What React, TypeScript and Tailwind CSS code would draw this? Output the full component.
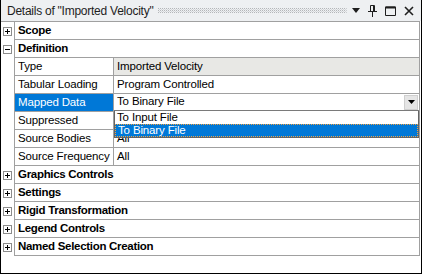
import React from "react";

const LINE = "border-[#a0a0a0]";

function Box({ open }: { open?: boolean }) {
  return (
    <svg width="9" height="9" viewBox="0 0 9 9" className="block">
      <rect x="0.5" y="0.5" width="8" height="8" fill="#fff" stroke="#8c8c8c" />
      <path d="M2 4.5h5" stroke="#000" strokeWidth="1" />
      {!open && <path d="M4.5 2v5" stroke="#000" strokeWidth="1" />}
    </svg>
  );
}

function Category({ title, open }: { title: string; open?: boolean }) {
  return (
    <div className="flex h-[18px]">
      <div className="w-[13px] flex items-center pl-[2px]">
        <Box open={open} />
      </div>
      <div className={`flex-1 border-l border-b ${LINE} flex items-center pl-[3px] font-bold tracking-[-0.3px] text-black`}>
        {title}
      </div>
    </div>
  );
}

function Prop({
  label,
  value,
  readOnly,
  selected,
  children,
}: {
  label: string;
  value?: string;
  readOnly?: boolean;
  selected?: boolean;
  children?: React.ReactNode;
}) {
  return (
    <div className="flex h-[18px]">
      <div className="w-[13px]" />
      <div className={`flex-1 flex border-l border-b ${LINE}`}>
        <div
          className={`w-[98px] flex items-center pl-[3px] whitespace-nowrap overflow-hidden ${
            selected ? "bg-[#0078d7] text-white" : "text-black"
          }`}
        >
          {label}
        </div>
        <div
          className={`relative flex-1 flex items-center border-l ${LINE} ${
            readOnly ? "bg-[#e8e8e5]" : "bg-white"
          }`}
        >
          {children ?? <span className="pl-[3px] whitespace-nowrap">{value}</span>}
        </div>
      </div>
    </div>
  );
}

function Combo() {
  return (
    <>
      <div className="absolute inset-0 flex items-center border-b border-[#7a7a7a] bg-white">
        <span className="pl-[3px] whitespace-nowrap">To Binary File</span>
        <div className="ml-auto mr-[1px] w-[14px] h-[15px] bg-[#e5e5e5] border border-[#cfcfcf] flex items-center justify-center">
          <svg width="7" height="4" viewBox="0 0 7 4">
            <path d="M0 0h7L3.5 4z" fill="#000" />
          </svg>
        </div>
      </div>
      <div className="absolute left-0 right-0 top-[17px] z-10 bg-white border-l border-r border-b border-[#646464]">
        <div className="h-[13px] flex items-center pl-[2px] leading-none whitespace-nowrap">To Input File</div>
        <div className="h-[13px] flex items-center pl-[2px] leading-none whitespace-nowrap bg-[#0078d7] text-white border border-dotted border-[#f0a040]">
          To Binary File
        </div>
      </div>
    </>
  );
}

export default function App() {
  return (
    <div className="w-[422px] h-[274px] bg-white border-l border-r border-b border-black font-['Liberation_Sans',Arial,sans-serif] text-[11.5px] tracking-[-0.15px] text-black overflow-hidden">
      <div className="h-[21px] bg-[#eef0f2] flex items-center pl-[6px] pr-[7px]">
        <span className="text-[12px] tracking-[-0.25px] text-[#1e1e1e] whitespace-nowrap">Details of "Imported Velocity"</span>
        <div className="flex-1 mx-[5px] h-[5px]">
          <svg width="100%" height="5" className="block">
            <defs>
              <pattern id="grip" width="2" height="2" patternUnits="userSpaceOnUse">
                <rect x="0" y="0" width="1" height="1" fill="#b4b6b9" />
                <rect x="1" y="1" width="1" height="1" fill="#d4d6d9" />
              </pattern>
            </defs>
            <rect width="100%" height="5" fill="url(#grip)" />
          </svg>
        </div>
        <div className="flex items-center gap-[8px]">
          <svg width="8" height="5" viewBox="0 0 8 5" className="block">
            <path d="M0 0h8L4 5z" fill="#1e1e1e" />
          </svg>
          <svg width="9" height="12" viewBox="0 0 9 12" className="block">
            <path d="M2.5 0.5h4v6h-4z" fill="none" stroke="#1e1e1e" />
            <path d="M5.5 1v5" stroke="#1e1e1e" />
            <path d="M0 6.5h9" stroke="#1e1e1e" />
            <path d="M4.5 7v5" stroke="#1e1e1e" />
          </svg>
          <svg width="11" height="10" viewBox="0 0 11 10" className="block">
            <path d="M0.5 1h10v8.5h-10z" fill="none" stroke="#1e1e1e" />
            <path d="M0.5 1.5h10" stroke="#1e1e1e" strokeWidth="2" />
          </svg>
          <svg width="10" height="10" viewBox="0 0 10 10" className="block">
            <path d="M1 1l8 8M9 1l-8 8" stroke="#1e1e1e" strokeWidth="1.6" />
          </svg>
        </div>
      </div>
      <div className={`border-t ${LINE} mr-[1px] border-r`}>
        <Category title="Scope" />
        <Category title="Definition" open />
        <Prop label="Type" value="Imported Velocity" readOnly />
        <Prop label="Tabular Loading" value="Program Controlled" />
        <Prop label="Mapped Data" selected>
          <Combo />
        </Prop>
        <Prop label="Suppressed" value="" />
        <Prop label="Source Bodies" value="All" />
        <Prop label="Source Frequency" value="All" />
        <Category title="Graphics Controls" />
        <Category title="Settings" />
        <Category title="Rigid Transformation" />
        <Category title="Legend Controls" />
        <Category title="Named Selection Creation" />
      </div>
    </div>
  );
}
